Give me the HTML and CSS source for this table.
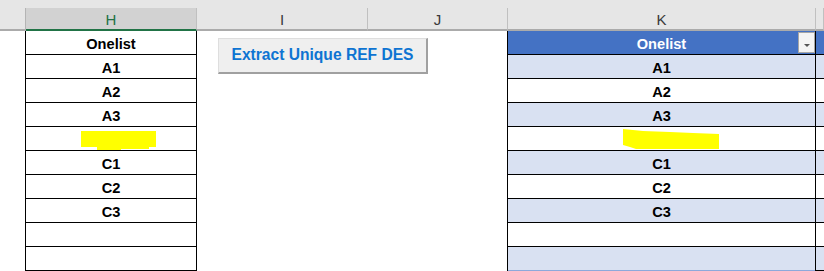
FILE: index.html
```html
<!DOCTYPE html>
<html lang="en">
<head>
<meta charset="utf-8">
<title>Onelist</title>
<link rel="stylesheet" href="styles.css">
</head>
<body>
<div class="sheet">
  <div class="col-heads">
    <div class="ch corner"></div>
    <div class="ch sel">H</div>
    <div class="ch">I</div>
    <div class="ch">J</div>
    <div class="ch">K</div>
    <div class="ch"></div>
  </div>

  <div class="grid">
    <div class="spacer"></div>

    <div class="list plain">
      <div class="cell">Onelist</div>
      <div class="cell">A1</div>
      <div class="cell">A2</div>
      <div class="cell">A3</div>
      <div class="cell mark">
        <svg width="170" height="23" viewBox="0 0 170 23">
          <rect x="55" y="4" width="75" height="16" fill="#ffff00"/>
          <rect x="71" y="20" width="24" height="3" fill="#ffff00"/>
          <rect x="95" y="20" width="28" height="2" fill="#ffff00"/>
        </svg>
      </div>
      <div class="cell">C1</div>
      <div class="cell">C2</div>
      <div class="cell">C3</div>
      <div class="cell"></div>
      <div class="cell"></div>
    </div>

    <div class="spacer"></div>
    <div class="spacer"></div>

    <div class="list table">
      <div class="cell thead">Onelist<span class="filter"><i class="arrow"></i></span></div>
      <div class="cell band">A1</div>
      <div class="cell">A2</div>
      <div class="cell band">A3</div>
      <div class="cell mark">
        <svg width="307" height="23" viewBox="0 0 307 23">
          <polygon points="115,2 135,4 162,5 185,6 211,7 211,22 128,22 122,20 115,18" fill="#ffff00"/>
        </svg>
      </div>
      <div class="cell band">C1</div>
      <div class="cell">C2</div>
      <div class="cell band">C3</div>
      <div class="cell"></div>
      <div class="cell band last"></div>
    </div>

    <div class="list tail">
      <div class="cell thead"></div>
      <div class="cell band"></div>
      <div class="cell"></div>
      <div class="cell band"></div>
      <div class="cell"></div>
      <div class="cell band"></div>
      <div class="cell"></div>
      <div class="cell band"></div>
      <div class="cell"></div>
      <div class="cell band"></div>
    </div>

    <button class="macro" type="button">Extract Unique REF DES</button>
  </div>
</div>
</body>
</html>
```

FILE: styles.css
```css
html, body {
  margin: 0;
  padding: 0;
  background: #ffffff;
}

body {
  width: 824px;
  height: 271px;
  overflow: hidden;
  font-family: "Liberation Sans", Arial, sans-serif;
}

/* column letter strip */
.col-heads {
  display: grid;
  grid-template-columns: 26px 171px 171px 140px 308px 1fr;
  height: 31px;
  box-sizing: border-box;
  padding-top: 8px;
  background: #e6e6e6;
}

.ch {
  display: flex;
  align-items: center;
  justify-content: center;
  box-sizing: border-box;
  border-right: 1px solid #c0c0c0;
  border-bottom: 2px solid #ababab;
  font-size: 15px;
  color: #3a3a3a;
  padding-top: 1px;
}

.ch.corner {
  border-right-color: #b4b4b4;
}

.ch.sel {
  background: #d2d2d2;
  color: #217346;
  border-bottom-color: #217346;
}

/* worksheet cells */
.grid {
  position: relative;
  display: grid;
  grid-template-columns: 25px 172px 170px 140px 309px 1fr;
  align-items: start;
}

.list {
  display: flex;
  flex-direction: column;
}

.list.plain,
.list.table {
  border-left: 1px solid #000000;
  border-right: 1px solid #000000;
}

.cell {
  position: relative;
  height: 24px;
  box-sizing: border-box;
  border-bottom: 1px solid #000000;
  padding-top: 3px;
  line-height: 20px;
  font-size: 14.6px;
  font-weight: bold;
  text-align: center;
  color: #000000;
}

.cell.mark {
  padding-top: 0;
}

.cell.mark svg {
  display: block;
}

.cell.band {
  background: #d9e1f2;
}

.cell.thead {
  background: #4472c4;
  color: #ffffff;
}

.cell.last {
  border-bottom-color: #8ea9db;
}

/* autofilter dropdown on the table header */
.filter {
  position: absolute;
  right: 0;
  top: 1px;
  width: 17px;
  height: 21px;
  box-sizing: border-box;
  background: #f4f4f4;
  border: 1px solid #a6a6a6;
  display: flex;
  justify-content: center;
  padding-top: 11px;
}

.arrow {
  display: block;
  width: 0;
  height: 0;
  border-left: 3px solid transparent;
  border-right: 3px solid transparent;
  border-top: 3px solid #555555;
}

/* form button floating over the sheet */
.macro {
  position: absolute;
  left: 218px;
  top: 7px;
  width: 210px;
  height: 36px;
  box-sizing: border-box;
  margin: 0;
  padding: 0 0 1px;
  background: #efefef;
  border-top: 1px solid #dedede;
  border-left: 1px solid #dedede;
  border-right: 2px solid #a0a0a0;
  border-bottom: 2px solid #a0a0a0;
  font-family: "Liberation Sans", Arial, sans-serif;
  font-size: 15.6px;
  font-weight: bold;
  color: #0e74d2;
  text-align: center;
}
```
